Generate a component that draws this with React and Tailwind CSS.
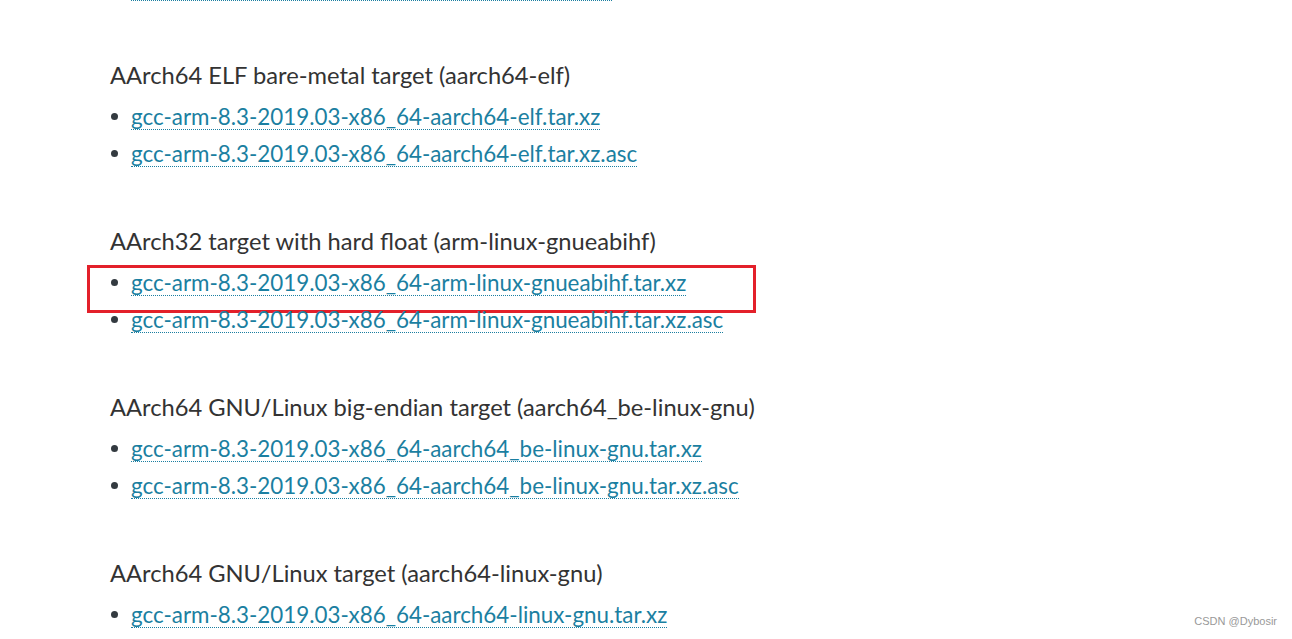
const sections = [
  {
    title: "AArch64 ELF bare-metal target (aarch64-elf)",
    files: ["gcc-arm-8.3-2019.03-x86_64-aarch64-elf.tar.xz", "gcc-arm-8.3-2019.03-x86_64-aarch64-elf.tar.xz.asc"],
  },
  {
    title: "AArch32 target with hard float (arm-linux-gnueabihf)",
    files: ["gcc-arm-8.3-2019.03-x86_64-arm-linux-gnueabihf.tar.xz", "gcc-arm-8.3-2019.03-x86_64-arm-linux-gnueabihf.tar.xz.asc"],
    boxed: 0,
  },
  {
    title: "AArch64 GNU/Linux big-endian target (aarch64_be-linux-gnu)",
    files: ["gcc-arm-8.3-2019.03-x86_64-aarch64_be-linux-gnu.tar.xz", "gcc-arm-8.3-2019.03-x86_64-aarch64_be-linux-gnu.tar.xz.asc"],
  },
  {
    title: "AArch64 GNU/Linux target (aarch64-linux-gnu)",
    files: ["gcc-arm-8.3-2019.03-x86_64-aarch64-linux-gnu.tar.xz", "gcc-arm-8.3-2019.03-x86_64-aarch64-linux-gnu.tar.xz.asc"],
  },
]

function FileItem({ name, boxed }) {
  return (
    <li className="relative flex items-center h-[37px] text-[22.4px]">
      {boxed && (
        <div className="absolute left-[-23px] top-[0.5px] w-[669px] h-[48px] border-[3px] border-[#e3202a] pointer-events-none" />
      )}
      <span className="w-[7px] h-[7px] rounded-full bg-[#333a40] ml-[1px] mr-[13px]" />
      <a href="#" className="text-[#1b7fa1] border-b border-dotted border-[#1b7fa1] leading-[25px]">
        {name}
      </a>
    </li>
  )
}

export default function App() {
  return (
    <div className="w-[1292px] h-[639px] bg-white overflow-hidden relative" style={{ fontFamily: "Lato, 'Open Sans', sans-serif" }}>
      <div className="pl-[110px] -mt-[31px]">
        {/* tail of the previous section */}
        <ul>
          <FileItem name="gcc-arm-8.3-2019.03-x86_64-arm-eabi.tar.xz.asc" />
        </ul>

        {sections.map((s) => (
          <section key={s.title} className="mt-[54px]">
            <h3 className="text-[#333] text-[23.7px] leading-[30px] mb-[8px]">{s.title}</h3>
            <ul>
              {s.files.map((f, i) => (
                <FileItem key={f} name={f} boxed={s.boxed === i} />
              ))}
            </ul>
          </section>
        ))}
      </div>

      {/* watermark */}
      <div className="absolute right-[15px] bottom-[10px] text-[11px] text-[#999]" style={{ fontFamily: "'Liberation Sans', Arial, sans-serif" }}>
        CSDN @Dybosir
      </div>
    </div>
  )
}
